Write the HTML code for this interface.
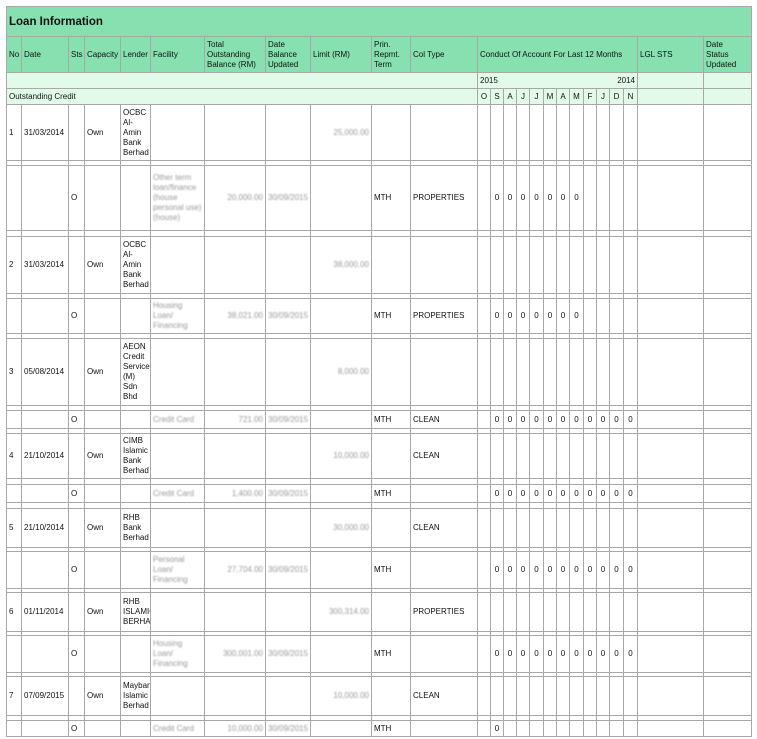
<!DOCTYPE html>
<html><head><meta charset="utf-8"><style>
body{margin:0;background:#fff;width:757px;height:739px;overflow:hidden;position:relative}
table{position:absolute;left:6px;top:6px;border-collapse:collapse;table-layout:fixed;width:745px}
td{border:1px solid #a8a8a8;padding:0 2px;font:8px "Liberation Sans",sans-serif;color:#111;vertical-align:middle;overflow:hidden;line-height:10px}
.t td{background:#86e0b0;font-weight:bold;font-size:11.5px}
.h td{background:#86e0b0}
.s td{background:#e2fbe8}
.m{text-align:center;padding:0}
.r{text-align:right}
.b{color:#999;filter:blur(0.9px)}
.g td{height:3px;padding:0;background:#fff}
</style></head><body>
<table>
<colgroup><col style="width:15px"><col style="width:47px"><col style="width:16px"><col style="width:36px"><col style="width:30px"><col style="width:54px"><col style="width:61px"><col style="width:45px"><col style="width:61px"><col style="width:39px"><col style="width:67px"><col style="width:13px"><col style="width:13px"><col style="width:13px"><col style="width:13px"><col style="width:14px"><col style="width:13px"><col style="width:13px"><col style="width:14px"><col style="width:13px"><col style="width:13px"><col style="width:14px"><col style="width:14px"><col style="width:66px"><col style="width:48px"></colgroup>
<tr class="t" style="height:30px"><td colspan="25">Loan Information</td></tr>
<tr class="h" style="height:36px"><td>No</td><td>Date</td><td>Sts</td><td>Capacity</td><td>Lender</td><td>Facility</td><td>Total Outstanding Balance (RM)</td><td>Date Balance Updated</td><td>Limit (RM)</td><td>Prin. Repmt. Term</td><td>Col Type</td><td colspan="12">Conduct Of Account For Last 12 Months</td><td>LGL STS</td><td style="padding-right:8px">Date Status Updated</td></tr>
<tr class="s" style="height:16px"><td colspan="11"></td><td colspan="12">2015<span style="float:right">2014</span></td><td></td><td></td></tr>
<tr class="s" style="height:16px"><td colspan="11">Outstanding Credit</td><td class="m">O</td><td class="m">S</td><td class="m">A</td><td class="m">J</td><td class="m">J</td><td class="m">M</td><td class="m">A</td><td class="m">M</td><td class="m">F</td><td class="m">J</td><td class="m">D</td><td class="m">N</td><td></td><td></td></tr>

<tr style="height:56px"><td>1</td><td>31/03/2014</td><td></td><td>Own</td><td>OCBC Al-Amin Bank Berhad</td><td></td><td></td><td></td><td class="r"><span class="b">25,000.00</span></td><td></td><td></td><td></td><td></td><td></td><td></td><td></td><td></td><td></td><td></td><td></td><td></td><td></td><td></td><td></td><td></td></tr>
<tr class="g" style="height:5px"><td></td><td></td><td></td><td></td><td></td><td></td><td></td><td></td><td></td><td></td><td></td><td></td><td></td><td></td><td></td><td></td><td></td><td></td><td></td><td></td><td></td><td></td><td></td><td></td><td></td></tr>
<tr style="height:65px"><td></td><td></td><td>O</td><td></td><td></td><td><span class="b">Other term loan/finance (house personal use) (house)</span></td><td class="r"><span class="b">20,000.00</span></td><td><span class="b">30/09/2015</span></td><td></td><td>MTH</td><td>PROPERTIES</td><td></td><td class="m">0</td><td class="m">0</td><td class="m">0</td><td class="m">0</td><td class="m">0</td><td class="m">0</td><td class="m">0</td><td></td><td></td><td></td><td></td><td></td><td></td></tr>
<tr class="g" style="height:6px"><td></td><td></td><td></td><td></td><td></td><td></td><td></td><td></td><td></td><td></td><td></td><td></td><td></td><td></td><td></td><td></td><td></td><td></td><td></td><td></td><td></td><td></td><td></td><td></td><td></td></tr>

<tr style="height:57px"><td>2</td><td>31/03/2014</td><td></td><td>Own</td><td>OCBC Al-Amin Bank Berhad</td><td></td><td></td><td></td><td class="r"><span class="b">38,000.00</span></td><td></td><td></td><td></td><td></td><td></td><td></td><td></td><td></td><td></td><td></td><td></td><td></td><td></td><td></td><td></td><td></td></tr>
<tr class="g" style="height:5px"><td></td><td></td><td></td><td></td><td></td><td></td><td></td><td></td><td></td><td></td><td></td><td></td><td></td><td></td><td></td><td></td><td></td><td></td><td></td><td></td><td></td><td></td><td></td><td></td><td></td></tr>
<tr style="height:35px"><td></td><td></td><td>O</td><td></td><td></td><td><span class="b">Housing Loan/ Financing</span></td><td class="r"><span class="b">38,021.00</span></td><td><span class="b">30/09/2015</span></td><td></td><td>MTH</td><td>PROPERTIES</td><td></td><td class="m">0</td><td class="m">0</td><td class="m">0</td><td class="m">0</td><td class="m">0</td><td class="m">0</td><td class="m">0</td><td></td><td></td><td></td><td></td><td></td><td></td></tr>
<tr class="g" style="height:5px"><td></td><td></td><td></td><td></td><td></td><td></td><td></td><td></td><td></td><td></td><td></td><td></td><td></td><td></td><td></td><td></td><td></td><td></td><td></td><td></td><td></td><td></td><td></td><td></td><td></td></tr>

<tr style="height:67px"><td>3</td><td>05/08/2014</td><td></td><td>Own</td><td>AEON Credit Service (M) Sdn Bhd</td><td></td><td></td><td></td><td class="r"><span class="b">8,000.00</span></td><td></td><td></td><td></td><td></td><td></td><td></td><td></td><td></td><td></td><td></td><td></td><td></td><td></td><td></td><td></td><td></td></tr>
<tr class="g" style="height:5px"><td></td><td></td><td></td><td></td><td></td><td></td><td></td><td></td><td></td><td></td><td></td><td></td><td></td><td></td><td></td><td></td><td></td><td></td><td></td><td></td><td></td><td></td><td></td><td></td><td></td></tr>
<tr style="height:18px"><td></td><td></td><td>O</td><td></td><td></td><td><span class="b">Credit Card</span></td><td class="r"><span class="b">721.00</span></td><td><span class="b">30/09/2015</span></td><td></td><td>MTH</td><td>CLEAN</td><td></td><td class="m">0</td><td class="m">0</td><td class="m">0</td><td class="m">0</td><td class="m">0</td><td class="m">0</td><td class="m">0</td><td class="m">0</td><td class="m">0</td><td class="m">0</td><td class="m">0</td><td></td><td></td></tr>
<tr class="g" style="height:5px"><td></td><td></td><td></td><td></td><td></td><td></td><td></td><td></td><td></td><td></td><td></td><td></td><td></td><td></td><td></td><td></td><td></td><td></td><td></td><td></td><td></td><td></td><td></td><td></td><td></td></tr>

<tr style="height:45px"><td>4</td><td>21/10/2014</td><td></td><td>Own</td><td>CIMB Islamic Bank Berhad</td><td></td><td></td><td></td><td class="r"><span class="b">10,000.00</span></td><td></td><td>CLEAN</td><td></td><td></td><td></td><td></td><td></td><td></td><td></td><td></td><td></td><td></td><td></td><td></td><td></td><td></td></tr>
<tr class="g" style="height:6px"><td></td><td></td><td></td><td></td><td></td><td></td><td></td><td></td><td></td><td></td><td></td><td></td><td></td><td></td><td></td><td></td><td></td><td></td><td></td><td></td><td></td><td></td><td></td><td></td><td></td></tr>
<tr style="height:18px"><td></td><td></td><td>O</td><td></td><td></td><td><span class="b">Credit Card</span></td><td class="r"><span class="b">1,400.00</span></td><td><span class="b">30/09/2015</span></td><td></td><td>MTH</td><td></td><td></td><td class="m">0</td><td class="m">0</td><td class="m">0</td><td class="m">0</td><td class="m">0</td><td class="m">0</td><td class="m">0</td><td class="m">0</td><td class="m">0</td><td class="m">0</td><td class="m">0</td><td></td><td></td></tr>
<tr class="g" style="height:6px"><td></td><td></td><td></td><td></td><td></td><td></td><td></td><td></td><td></td><td></td><td></td><td></td><td></td><td></td><td></td><td></td><td></td><td></td><td></td><td></td><td></td><td></td><td></td><td></td><td></td></tr>

<tr style="height:39px"><td>5</td><td>21/10/2014</td><td></td><td>Own</td><td>RHB Bank Berhad</td><td></td><td></td><td></td><td class="r"><span class="b">30,000.00</span></td><td></td><td>CLEAN</td><td></td><td></td><td></td><td></td><td></td><td></td><td></td><td></td><td></td><td></td><td></td><td></td><td></td><td></td></tr>
<tr class="g" style="height:4px"><td></td><td></td><td></td><td></td><td></td><td></td><td></td><td></td><td></td><td></td><td></td><td></td><td></td><td></td><td></td><td></td><td></td><td></td><td></td><td></td><td></td><td></td><td></td><td></td><td></td></tr>
<tr style="height:37px"><td></td><td></td><td>O</td><td></td><td></td><td><span class="b">Personal Loan/ Financing</span></td><td class="r"><span class="b">27,704.00</span></td><td><span class="b">30/09/2015</span></td><td></td><td>MTH</td><td></td><td></td><td class="m">0</td><td class="m">0</td><td class="m">0</td><td class="m">0</td><td class="m">0</td><td class="m">0</td><td class="m">0</td><td class="m">0</td><td class="m">0</td><td class="m">0</td><td class="m">0</td><td></td><td></td></tr>
<tr class="g" style="height:4px"><td></td><td></td><td></td><td></td><td></td><td></td><td></td><td></td><td></td><td></td><td></td><td></td><td></td><td></td><td></td><td></td><td></td><td></td><td></td><td></td><td></td><td></td><td></td><td></td><td></td></tr>

<tr style="height:39px"><td>6</td><td>01/11/2014</td><td></td><td>Own</td><td>RHB ISLAMIC BERHAD</td><td></td><td></td><td></td><td class="r"><span class="b">300,314.00</span></td><td></td><td>PROPERTIES</td><td></td><td></td><td></td><td></td><td></td><td></td><td></td><td></td><td></td><td></td><td></td><td></td><td></td><td></td></tr>
<tr class="g" style="height:4px"><td></td><td></td><td></td><td></td><td></td><td></td><td></td><td></td><td></td><td></td><td></td><td></td><td></td><td></td><td></td><td></td><td></td><td></td><td></td><td></td><td></td><td></td><td></td><td></td><td></td></tr>
<tr style="height:37px"><td></td><td></td><td>O</td><td></td><td></td><td><span class="b">Housing Loan/ Financing</span></td><td class="r"><span class="b">300,001.00</span></td><td><span class="b">30/09/2015</span></td><td></td><td>MTH</td><td></td><td></td><td class="m">0</td><td class="m">0</td><td class="m">0</td><td class="m">0</td><td class="m">0</td><td class="m">0</td><td class="m">0</td><td class="m">0</td><td class="m">0</td><td class="m">0</td><td class="m">0</td><td></td><td></td></tr>
<tr class="g" style="height:4px"><td></td><td></td><td></td><td></td><td></td><td></td><td></td><td></td><td></td><td></td><td></td><td></td><td></td><td></td><td></td><td></td><td></td><td></td><td></td><td></td><td></td><td></td><td></td><td></td><td></td></tr>

<tr style="height:39px"><td>7</td><td>07/09/2015</td><td></td><td>Own</td><td>Maybank Islamic Berhad</td><td></td><td></td><td></td><td class="r"><span class="b">10,000.00</span></td><td></td><td>CLEAN</td><td></td><td></td><td></td><td></td><td></td><td></td><td></td><td></td><td></td><td></td><td></td><td></td><td></td><td></td></tr>
<tr class="g" style="height:5px"><td></td><td></td><td></td><td></td><td></td><td></td><td></td><td></td><td></td><td></td><td></td><td></td><td></td><td></td><td></td><td></td><td></td><td></td><td></td><td></td><td></td><td></td><td></td><td></td><td></td></tr>
<tr style="height:16px"><td></td><td></td><td>O</td><td></td><td></td><td><span class="b">Credit Card</span></td><td class="r"><span class="b">10,000.00</span></td><td><span class="b">30/09/2015</span></td><td></td><td>MTH</td><td></td><td></td><td class="m">0</td><td></td><td></td><td></td><td></td><td></td><td></td><td></td><td></td><td></td><td></td><td></td><td></td></tr>
</table>
</body></html>
